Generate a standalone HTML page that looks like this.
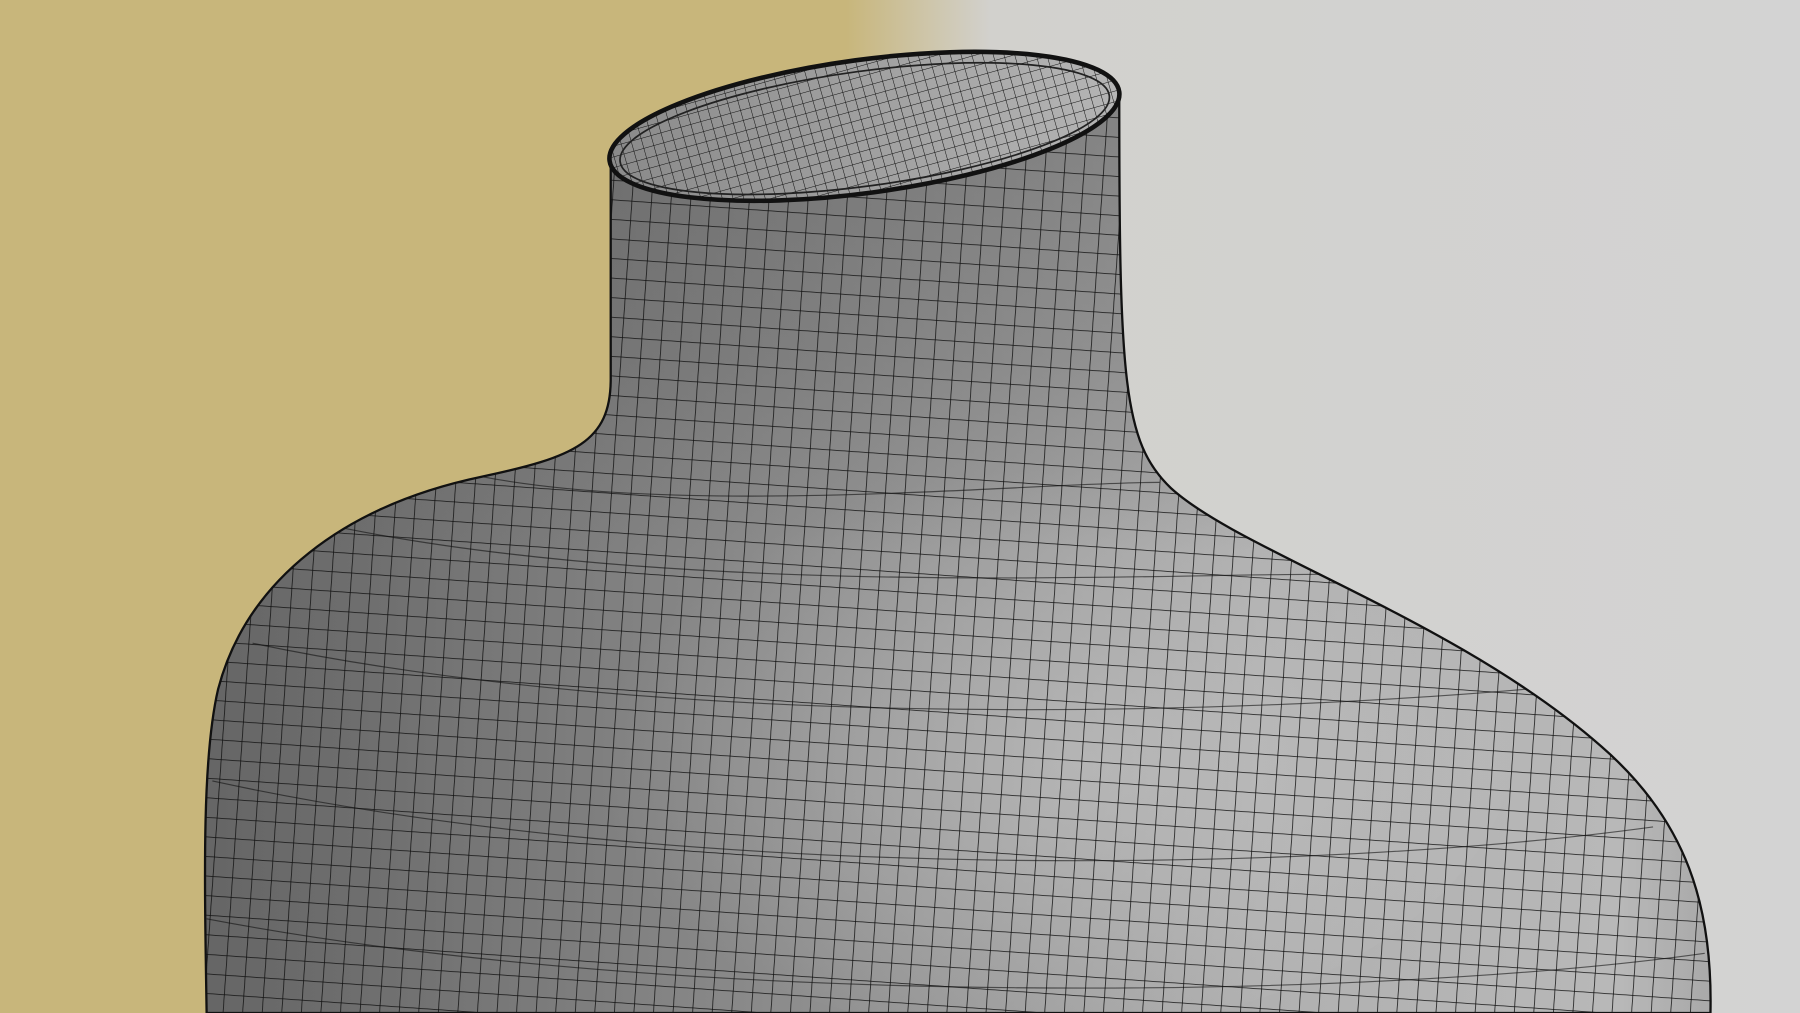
<!DOCTYPE html>
<html><head><meta charset="utf-8"><style>
html,body{margin:0;padding:0;width:1800px;height:1013px;overflow:hidden;background:#d2d2d2}
svg{display:block}
</style></head><body>
<svg width="1800" height="1013" viewBox="0 0 1568 882" preserveAspectRatio="none" xmlns="http://www.w3.org/2000/svg">
<defs>
<linearGradient id="bg" x1="0" x2="1" y1="0" y2="0">
<stop offset="0" stop-color="#c8b67b"/>
<stop offset="0.47" stop-color="#c8b67b"/>
<stop offset="0.55" stop-color="#d2d1cd"/>
<stop offset="1" stop-color="#d3d3d3"/>
</linearGradient>
<linearGradient id="body" x1="0" x2="1" y1="0" y2="0">
<stop offset="0" stop-color="#5a5a5a"/>
<stop offset="0.2" stop-color="#6e6e6e"/>
<stop offset="0.45" stop-color="#8e8e8e"/>
<stop offset="0.7" stop-color="#b0b0b0"/>
<stop offset="0.9" stop-color="#b8b8b8"/>
<stop offset="1" stop-color="#9a9a9a"/>
</linearGradient>
<linearGradient id="neckshade" x1="0" x2="0" y1="0" y2="1">
<stop offset="0" stop-color="#555" stop-opacity="0.45"/>
<stop offset="0.6" stop-color="#555" stop-opacity="0.25"/>
<stop offset="1" stop-color="#555" stop-opacity="0"/>
</linearGradient>
<radialGradient id="hl" cx="0.55" cy="0.55" r="0.5">
<stop offset="0" stop-color="#c8c8c8" stop-opacity="0.5"/>
<stop offset="1" stop-color="#c8c8c8" stop-opacity="0"/>
</radialGradient>
<linearGradient id="top" x1="0" x2="1" y1="0" y2="0">
<stop offset="0" stop-color="#8a8a8a"/>
<stop offset="1" stop-color="#b5b5b5"/>
</linearGradient>
<pattern id="grid" width="17" height="17" patternUnits="userSpaceOnUse" patternTransform="rotate(4)">
<path d="M0 0H17M0 0V17" stroke="#111" stroke-width="1.3" fill="none"/>
</pattern>
<pattern id="gridfine" width="9" height="9" patternUnits="userSpaceOnUse" patternTransform="rotate(-8)">
<path d="M0 0H9M0 0V9" stroke="#111" stroke-width="0.9" fill="none"/>
</pattern>
<clipPath id="vc"><path id="vp" d="M532 140 L532 330 C532 385 500 398 420 415 C300 440 215 505 190 600 C176 660 178 760 180 882 L1490 882 C1492 790 1470 715 1395 650 C1270 540 1080 480 1020 425 C978 385 975 330 975 80 Z"/></clipPath>
</defs>
<rect width="1568" height="882" fill="url(#bg)"/>
<g clip-path="url(#vc)">
<rect width="1568" height="882" fill="url(#body)"/>
<ellipse cx="900" cy="640" rx="420" ry="260" fill="url(#hl)"/>
<rect x="0" y="60" width="1568" height="420" fill="url(#neckshade)"/>
<rect width="1568" height="882" fill="url(#grid)"/>
</g>
<use href="#vp" fill="none" stroke="#111" stroke-width="2"/>
<g transform="rotate(-7.7 753 110)">
<ellipse cx="753" cy="110" rx="224" ry="58" fill="url(#top)" stroke="#111" stroke-width="4"/>
<ellipse cx="753" cy="110" rx="222" ry="56" fill="url(#gridfine)"/>
<ellipse cx="753" cy="112" rx="215" ry="50" fill="none" stroke="#222" stroke-width="1.5"/>
</g>
<g fill="none" stroke="#111" stroke-width="1" opacity="0.6">
<path d="M420 415 C600 450 900 420 1010 420"/>
<path d="M300 460 C600 520 1000 500 1150 500"/>
<path d="M220 560 C600 640 1100 620 1330 600"/>
<path d="M185 680 C600 770 1150 760 1440 720"/>
<path d="M180 800 C600 880 1200 870 1485 830"/>
</g>
</svg>
</body></html>
